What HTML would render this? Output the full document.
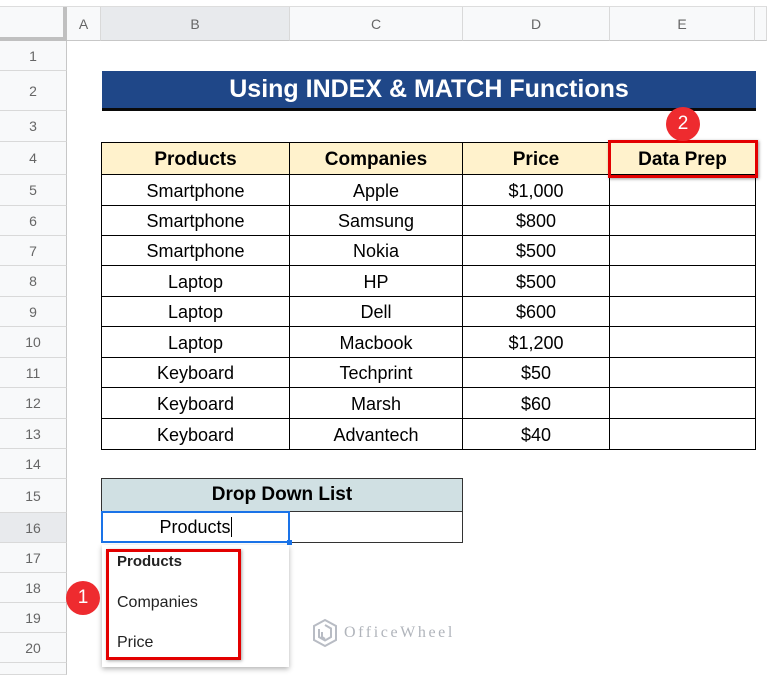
<!DOCTYPE html>
<html><head><meta charset="utf-8"><style>
*{margin:0;padding:0;box-sizing:border-box}
body{width:767px;height:673px;background:#fff;position:relative;overflow:hidden;font-family:"Liberation Sans",Arial,sans-serif}
.a{position:absolute}
.rh{position:absolute;left:0;width:67px;background:#f8f9fa;border-bottom:1px solid #d9d9d9;border-right:1px solid #c7c7c7;color:#666;font-size:14px;display:flex;align-items:center;justify-content:center}
.ch{position:absolute;top:7px;height:34px;background:#f8f9fa;border-right:1px solid #d9d9d9;border-bottom:1px solid #c7c7c7;color:#666;font-size:14px;display:flex;align-items:center;justify-content:center}
.c{position:absolute;display:flex;align-items:center;justify-content:center;font-size:18px;color:#000;border-right:1px solid #000;border-bottom:1px solid #000;padding-top:2px}
.h{background:#fff2cc;font-weight:bold;font-size:19px}
.badge{position:absolute;width:34px;height:34px;border-radius:50%;background:#ee2b2f;color:#fff;font-size:19px;display:flex;align-items:center;justify-content:center}
</style></head><body>
<div class="a" style="left:0;top:0;width:767px;height:7px;background:#fff;border-bottom:1px solid #ddd"></div>
<div class="a" style="left:0;top:7px;width:67px;height:34px;background:#f8f9fa;border-right:4px solid #c0c0c0;border-bottom:4px solid #c0c0c0"></div>
<div class="ch" style="left:67px;width:34px">A</div>
<div class="ch" style="left:101px;width:189px;background:#e8eaed">B</div>
<div class="ch" style="left:290px;width:173px">C</div>
<div class="ch" style="left:463px;width:147px">D</div>
<div class="ch" style="left:610px;width:145px">E</div>
<div class="ch" style="left:755px;width:12px"></div>

<div class="rh" style="top:41px;height:30px">1</div>
<div class="rh" style="top:71px;height:40px">2</div>
<div class="rh" style="top:111px;height:31px">3</div>
<div class="rh" style="top:142px;height:33px">4</div>
<div class="rh" style="top:175px;height:31px">5</div>
<div class="rh" style="top:206px;height:30px">6</div>
<div class="rh" style="top:236px;height:30px">7</div>
<div class="rh" style="top:266px;height:31px">8</div>
<div class="rh" style="top:297px;height:30px">9</div>
<div class="rh" style="top:327px;height:31px">10</div>
<div class="rh" style="top:358px;height:30px">11</div>
<div class="rh" style="top:388px;height:31px">12</div>
<div class="rh" style="top:419px;height:30px">13</div>
<div class="rh" style="top:449px;height:30px">14</div>
<div class="rh" style="top:479px;height:34px">15</div>
<div class="rh" style="top:513px;height:30px;background:#e8eaed">16</div>
<div class="rh" style="top:543px;height:30px">17</div>
<div class="rh" style="top:573px;height:30px">18</div>
<div class="rh" style="top:603px;height:30px">19</div>
<div class="rh" style="top:633px;height:30px">20</div>
<div class="rh" style="top:663px;height:12px"></div>

<div class="a" style="left:102px;top:71px;width:654px;height:40px;background:#1f4788;border-bottom:3px solid #0a0a0a;color:#fff;font-weight:bold;font-size:25px;display:flex;align-items:center;justify-content:center">Using INDEX &amp; MATCH Functions</div>

<div class="a" style="left:101px;top:142px;width:655px;height:308px;border-left:1px solid #000;border-top:1px solid #000"></div>
<div class="c h" style="left:102px;top:143px;width:188px;height:32px">Products</div>
<div class="c h" style="left:290px;top:143px;width:173px;height:32px">Companies</div>
<div class="c h" style="left:463px;top:143px;width:147px;height:32px">Price</div>
<div class="c h" style="left:610px;top:143px;width:146px;height:32px">Data Prep</div>

<div class="c" style="left:102px;top:175px;width:188px;height:31px">Smartphone</div><div class="c" style="left:290px;top:175px;width:173px;height:31px">Apple</div><div class="c" style="left:463px;top:175px;width:147px;height:31px">$1,000</div><div class="c" style="left:610px;top:175px;width:146px;height:31px"></div>
<div class="c" style="left:102px;top:206px;width:188px;height:30px">Smartphone</div><div class="c" style="left:290px;top:206px;width:173px;height:30px">Samsung</div><div class="c" style="left:463px;top:206px;width:147px;height:30px">$800</div><div class="c" style="left:610px;top:206px;width:146px;height:30px"></div>
<div class="c" style="left:102px;top:236px;width:188px;height:30px">Smartphone</div><div class="c" style="left:290px;top:236px;width:173px;height:30px">Nokia</div><div class="c" style="left:463px;top:236px;width:147px;height:30px">$500</div><div class="c" style="left:610px;top:236px;width:146px;height:30px"></div>
<div class="c" style="left:102px;top:266px;width:188px;height:31px">Laptop</div><div class="c" style="left:290px;top:266px;width:173px;height:31px">HP</div><div class="c" style="left:463px;top:266px;width:147px;height:31px">$500</div><div class="c" style="left:610px;top:266px;width:146px;height:31px"></div>
<div class="c" style="left:102px;top:297px;width:188px;height:30px">Laptop</div><div class="c" style="left:290px;top:297px;width:173px;height:30px">Dell</div><div class="c" style="left:463px;top:297px;width:147px;height:30px">$600</div><div class="c" style="left:610px;top:297px;width:146px;height:30px"></div>
<div class="c" style="left:102px;top:327px;width:188px;height:31px">Laptop</div><div class="c" style="left:290px;top:327px;width:173px;height:31px">Macbook</div><div class="c" style="left:463px;top:327px;width:147px;height:31px">$1,200</div><div class="c" style="left:610px;top:327px;width:146px;height:31px"></div>
<div class="c" style="left:102px;top:358px;width:188px;height:30px">Keyboard</div><div class="c" style="left:290px;top:358px;width:173px;height:30px">Techprint</div><div class="c" style="left:463px;top:358px;width:147px;height:30px">$50</div><div class="c" style="left:610px;top:358px;width:146px;height:30px"></div>
<div class="c" style="left:102px;top:388px;width:188px;height:31px">Keyboard</div><div class="c" style="left:290px;top:388px;width:173px;height:31px">Marsh</div><div class="c" style="left:463px;top:388px;width:147px;height:31px">$60</div><div class="c" style="left:610px;top:388px;width:146px;height:31px"></div>
<div class="c" style="left:102px;top:419px;width:188px;height:31px">Keyboard</div><div class="c" style="left:290px;top:419px;width:173px;height:31px">Advantech</div><div class="c" style="left:463px;top:419px;width:147px;height:31px">$40</div><div class="c" style="left:610px;top:419px;width:146px;height:31px"></div>

<div class="a" style="left:608px;top:140px;width:150px;height:38px;border:3px solid #e30000;box-shadow:1px 1px 3px rgba(0,0,0,.4)"></div>
<div class="badge" style="left:666px;top:107px">2</div>

<div class="a" style="left:101px;top:478px;width:362px;height:65px;border:1px solid #333"></div>
<div class="a" style="left:102px;top:479px;width:360px;height:33px;background:#d0e0e3;border-bottom:1px solid #333;font-weight:bold;font-size:19px;display:flex;align-items:center;justify-content:center">Drop Down List</div>
<div class="a" style="left:289px;top:512px;width:1px;height:30px;background:#333"></div>
<div class="a" style="left:101px;top:511px;width:189px;height:32px;border:2px solid #1a73e8;background:#fff;font-size:18px;display:flex;align-items:center;justify-content:center">Products<span style="display:inline-block;width:1px;height:20px;background:#000"></span></div>
<div class="a" style="left:287px;top:540px;width:5px;height:5px;background:#1a73e8"></div>

<div class="a" style="left:102px;top:545px;width:187px;height:122px;background:#fff;box-shadow:0 2px 5px rgba(0,0,0,.3)"></div>
<div class="a" style="left:106px;top:549px;width:135px;height:111px;border:3px solid #e30000;box-shadow:1px 1px 3px rgba(0,0,0,.35)"></div>
<div class="a" style="left:117px;top:553px;font-size:15px;font-weight:bold;color:#222">Products</div>
<div class="a" style="left:117px;top:594px;font-size:16px;color:#222">Companies</div>
<div class="a" style="left:117px;top:634px;font-size:16px;color:#222">Price</div>
<div class="badge" style="left:66px;top:581px">1</div>

<svg class="a" style="left:311px;top:618px" width="28" height="30" viewBox="0 0 28 30"><g fill="none" stroke="#b8bcc4" stroke-width="2"><path d="M14 2 L25 8 L25 22 L14 28 L3 22 L3 8 Z"/><path d="M14 7 L20 10.5 L20 19 L14 22.5 L8 19 L8 11"/><path d="M11 14 v5 l3 2"/></g></svg>
<div class="a" style="left:344px;top:624px;font-family:'Liberation Serif',serif;font-size:16px;letter-spacing:2.6px;color:#b0b4bb">OfficeWheel</div>
</body></html>
